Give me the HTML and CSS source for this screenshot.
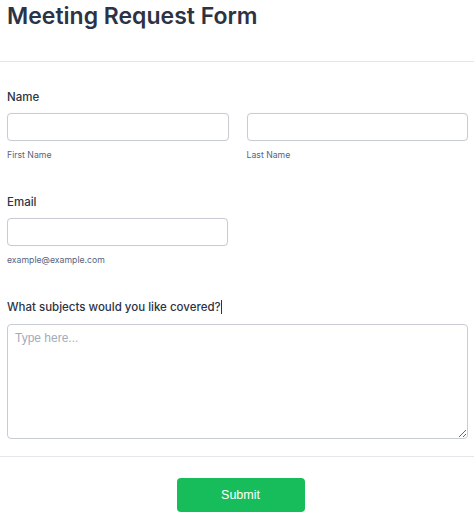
FILE: index.html
```html
<!DOCTYPE html>
<html lang="en">

<head>
    <meta charset="UTF-8">
    <meta name="viewport" content="width=device-width, initial-scale=1.0">
    <title>Meeting Request Form</title>
    <link rel="stylesheet" href="styles.css">
</head>

<body>
    <form class="form" id="meetingForm">
        <div class="form-header">
            <h1>Meeting Request Form</h1>
        </div>

        <div class="form-body">
            <div class="field">
                <label class="field-label">Name</label>
                <div class="name-row">
                    <div class="sub-field">
                        <input type="text" class="text-input" id="firstName">
                        <span class="sublabel">First Name</span>
                    </div>
                    <div class="sub-field">
                        <input type="text" class="text-input" id="lastName">
                        <span class="sublabel">Last Name</span>
                    </div>
                </div>
            </div>

            <div class="field">
                <label class="field-label">Email</label>
                <div class="email-wrap">
                    <input type="email" class="text-input" id="email">
                    <span class="sublabel">example@example.com</span>
                </div>
            </div>

            <div class="field">
                <label class="field-label field-label-wide">What subjects would you like covered?<span class="caret"></span></label>
                <textarea class="text-area" placeholder="Type here..."></textarea>
            </div>
        </div>

        <div class="form-footer">
            <button type="submit" class="btn-submit">Submit</button>
        </div>
    </form>
</body>

</html>
```

FILE: styles.css
```css
:root {
    --text: #2c3345;
    --muted: #57647e;
    --border: #c8ccd4;
    --line: #e4e6ea;
    --green: #18bd5b;
}

* {
    margin: 0;
    padding: 0;
    box-sizing: border-box;
}

body {
    background-color: #fff;
    color: var(--text);
    font-family: Inter, 'Liberation Sans', Arial, sans-serif;
    width: 474px;
}

.form-header {
    padding: 2px 0 31px 7px;
    border-bottom: 1px solid var(--line);
}

.form-header h1 {
    font-size: 23px;
    line-height: 28px;
    font-weight: 600;
    color: var(--text);
}

.form-body {
    padding: 27px 6px 17px 7px;
    border-bottom: 1px solid var(--line);
}

.field {
    margin-bottom: 32px;
}

.field:last-child {
    margin-bottom: 0;
}

.field-label {
    display: block;
    font-size: 11.5px;
    line-height: 16px;
    font-weight: 500;
    color: var(--text);
    margin-bottom: 8px;
}

.field-label-wide {
    margin-bottom: 9px;
}

.caret {
    display: inline-block;
    width: 1px;
    height: 14px;
    background-color: #333;
    vertical-align: -3px;
}

.name-row {
    display: flex;
    gap: 18px;
}

.sub-field {
    flex: 1;
    display: flex;
    flex-direction: column;
}

.email-wrap {
    width: 221px;
    display: flex;
    flex-direction: column;
}

.text-input {
    width: 100%;
    height: 28px;
    border: 1px solid var(--border);
    border-radius: 4px;
    background-color: #fff;
    box-shadow: 0 0 1px rgba(0, 0, 0, 0.08);
}

.sublabel {
    display: block;
    margin-top: 8px;
    font-size: 8.7px;
    line-height: 13px;
    color: var(--muted);
}

.text-area {
    display: block;
    width: 100%;
    height: 115px;
    border: 1px solid var(--border);
    border-radius: 4px;
    padding: 6px 7px;
    font-family: 'Liberation Sans', Arial, sans-serif;
    font-size: 12px;
    color: var(--text);
    resize: vertical;
}

.text-area::placeholder {
    color: #a3abba;
}

.form-footer {
    padding: 21px 0 0 7px;
    text-align: center;
}

.btn-submit {
    width: 128px;
    height: 34px;
    border: none;
    border-radius: 4px;
    background-color: var(--green);
    color: #fff;
    font-family: 'Liberation Sans', Arial, sans-serif;
    font-size: 12.5px;
    cursor: pointer;
}
```
